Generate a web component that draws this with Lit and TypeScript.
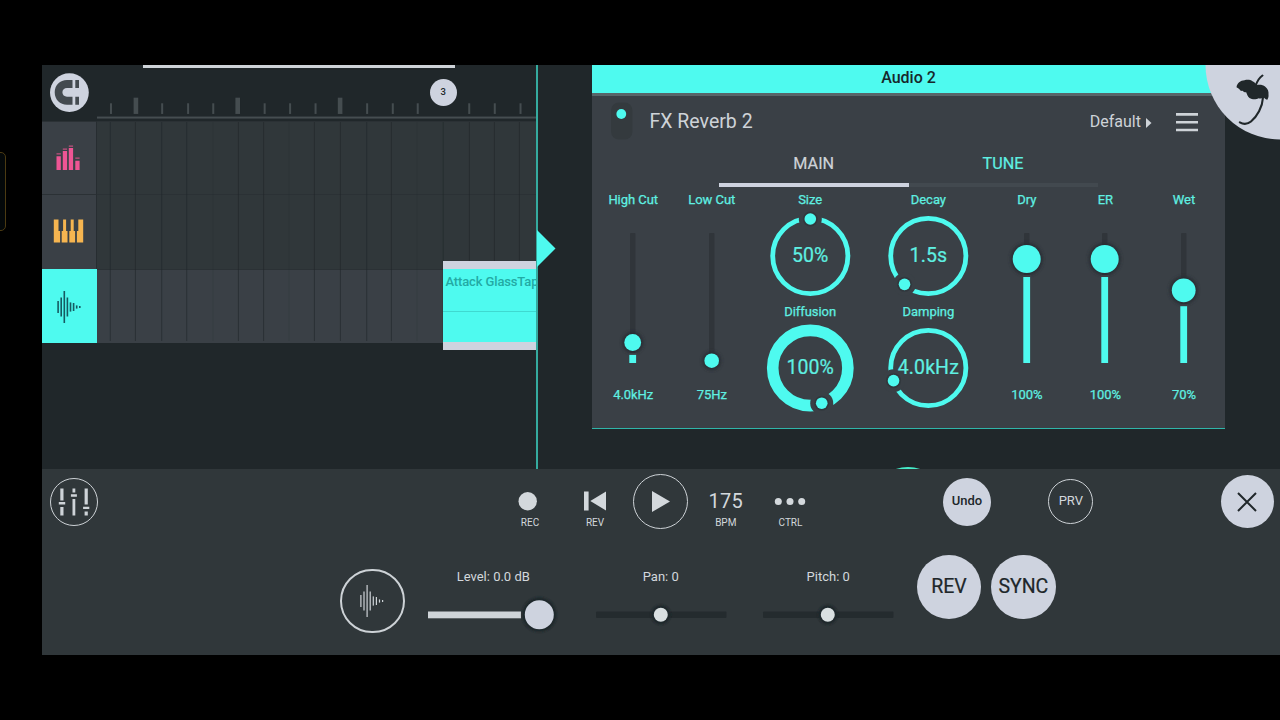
import { LitElement, html, svg, css } from "lit";
import { customElement, property } from "lit/decorators.js";

/** Vertical fader: label, track with thumb, value. */
@customElement("fx-fader")
export class FxFader extends LitElement {
  @property() label = "";
  @property() value = "";
  @property({ type: Number }) thumb = 0;
  @property({ type: Number }) radius = 8;

  static styles = css`
    :host { display: flex; flex-direction: column; align-items: center; }
    .label, .value { font-size: 13px; line-height: 16px; font-weight: 400; -webkit-text-stroke: 0.25px #5ff0e2; white-space: nowrap; letter-spacing: -0.05px; }
    .value { margin-top: 14px; }
    svg { display: block; margin-top: 15px; }
  `;

  render() {
    const fillTop = this.thumb + this.radius + 4;
    return html`
      <div class="label">${this.label}</div>
      <svg width="60" height="150" viewBox="0 0 60 150">
        <defs>
          <filter id="s" x="-50%" y="-50%" width="200%" height="200%"><feGaussianBlur stdDeviation="1.6" /></filter>
        </defs>
        <rect x="27" y="10" width="5.5" height="130" fill="#30353a" rx="1" />
        <circle cx="29.7" cy=${this.thumb} r=${this.radius + 2.5} fill="#262b31" opacity=".75" filter="url(#s)" />
        <rect x="26" y=${fillTop - 2} width="8" height="${Math.max(0, 142 - fillTop)}" fill="#3a4046" />
        ${fillTop < 138
          ? svg`<rect x="26.3" y=${fillTop} width="6.8" height=${140 - fillTop} fill="#4efaef" />`
          : ""}
        <circle cx="29.7" cy=${this.thumb} r=${this.radius} fill="#4efaef" />
      </svg>
      <div class="value">${this.value}</div>
    `;
  }
}

/** Rotary dial: ring with an indicator dot and a centered readout. */
@customElement("fx-dial")
export class FxDial extends LitElement {
  @property() label = "";
  @property() value = "";
  @property({ type: Number }) angle = 0;
  @property({ type: Number }) ring = 4.8;

  static styles = css`
    :host { display: flex; flex-direction: column; align-items: center; height: 111.5px; }
    .label { font-size: 13px; line-height: 16px; font-weight: 400; -webkit-text-stroke: 0.25px #5ff0e2; white-space: nowrap; letter-spacing: -0.05px; }
    .dial { display: grid; place-items: center; margin-top: 3.4px; }
    .dial > * { grid-area: 1 / 1; }
    svg { display: block; }
    .value { font-size: 19.5px; line-height: 24px; margin-top: -0.6px; letter-spacing: 0.1px; white-space: nowrap; -webkit-text-stroke: 0.2px #5ff0e2; }
  `;

  render() {
    const a = (this.angle * Math.PI) / 180;
    const x = 45.3 + Math.sin(a) * 37;
    const y = 45 - Math.cos(a) * 37;
    return html`
      <div class="label">${this.label}</div>
      <div class="dial">
        <svg width="90" height="90" viewBox="0 0 90 90">
          <circle cx="45.3" cy="45" r="37.6" fill="none" stroke="#4efaef" stroke-width=${this.ring} />
          <circle cx=${x} cy=${y} r="11.5" fill="#3a4046" />
          <circle cx=${x} cy=${y} r="7.5" fill="#2c3237" opacity=".6" />
          <circle cx=${x} cy=${y} r="5.8" fill="#4efaef" />
        </svg>
        <div class="value">${this.value}</div>
      </div>
    `;
  }
}

/** Horizontal slider with a caption above it. */
@customElement("mix-slider")
export class MixSlider extends LitElement {
  @property() label = "";
  @property({ type: Number }) thumb = 64.8;
  @property({ type: Number }) radius = 7;
  @property({ type: Boolean }) filled = false;

  static styles = css`
    :host { display: flex; flex-direction: column; align-items: center; width: 130.5px; }
    .label { font-size: 13px; line-height: 16px; color: #d3d8dc; white-space: nowrap; }
    svg { display: block; overflow: visible; margin-top: 10px; }
  `;

  render() {
    return html`
      <div class="label">${this.label}</div>
      <svg width="130.5" height="40" viewBox="0 0 130.5 40">
        <defs>
          <filter id="s" x="-50%" y="-50%" width="200%" height="200%"><feGaussianBlur stdDeviation="1.2" /></filter>
        </defs>
        ${this.filled
          ? svg`<rect x="0" y="16.5" width=${this.thumb - 18.3} height="6.8" fill="#cfd4d8" />`
          : svg`<rect x="0" y="16.5" width="130.5" height="6.5" rx="1" fill="#242b2e" />`}
        <circle cx=${this.thumb} cy="19.7" r=${this.radius + 2.6} fill="#1e2529" filter="url(#s)" />
        <circle cx=${this.thumb} cy="19.7" r=${this.radius} fill=${this.filled ? "#ced3df" : "#d9dfe1"} />
      </svg>
    `;
  }
}

const WAVE: Array<[number, number]> = [
  [0, 6], [3.1, 9.5], [6.2, 16], [9.3, 9.5], [12.4, 4.6], [15.5, 4], [18.6, 1.6], [21.7, 1],
];

const wave = (color: string, w: number) => html`
  <svg width="24" height="34" viewBox="0 0 24 34">
    ${WAVE.map(([x, h]) => svg`<rect x=${x + 0.3} y=${17 - h} width=${w} height=${h * 2} fill=${color} />`)}
  </svg>
`;

const TICKS = [111, 136, 162.3, 188.3, 213.5, 238, 265, 290.5, 316, 340.6, 367.7, 393.4, 418.4, 470, 495.6, 521.4];
const LINES = [110.3, 135.4, 161.7, 186.7, 213, 238.4, 263.6, 289, 314.4, 340.4, 366.7, 391.4, 417, 443.2, 469.4, 494.4, 519.4];
const WIDE = [1, 5, 9];
const FAINT = [4, 7, 12];

@customElement("app-root")
export class AppRoot extends LitElement {
  static styles = css`
    :host { display: block; width: 1280px; height: 720px; background: #000; overflow: hidden; position: relative;
      font-family: Roboto, sans-serif; box-sizing: border-box; padding: 65px 0 65px 42px; }
    * { box-sizing: border-box; }
    svg { display: block; }
    .edge { position: absolute; left: -10px; top: 152px; width: 15.5px; height: 79px; border: 1px solid #4b3a12; border-radius: 5px; background: #040809; }

    .stage { position: relative; display: flex; height: 404px; background: #20272a; overflow: hidden; }
    .arranger { width: 494px; position: relative; flex: none; overflow: hidden; }
    .head { display: flex; height: 56px; }
    .corner { width: 55px; padding: 8px 0 0 8px; }
    .ruler { width: 440px; height: 57px; }
    .tracks { display: grid; grid-template: 73px 75px 74px / 55px 1fr; }
    .tracks > div { border-top: 1px solid #2b3135; }
    .tile { background: #3a4046; display: grid; place-items: center; border-right: 1px solid #272d31; }
    .tile.keys { padding-bottom: 1px; }
    .tracks > .tile.on { background: #4efaef; border-color: #4efaef; padding-top: 1px; }
    .lane { background: #30373a; }
    .lane.on { background: #3a4046; }
    .grid { position: absolute; left: 55px; top: 57px; }
    .scroll { position: absolute; left: 101px; top: 0; width: 312px; height: 2.6px; background: #ced3d8; }
    .bar { position: absolute; left: 387.6px; top: 14.2px; width: 27px; height: 27px; border-radius: 50%; background: #ced3df; color: #20272a;
      font-size: 9.5px; font-weight: 500; line-height: 25px; text-align: center; }
    .clip { position: absolute; left: 401px; top: 196px; width: 93px; height: 88.5px; background: #4efaef; border: solid #ced3df; border-width: 8px 0; }
    .clip-name { font-size: 13px; font-weight: 500; line-height: 16px; padding: 5px 0 0 2.5px; color: #23aaa4; white-space: nowrap; height: 43px; border-bottom: 1px solid #3fd9d0; letter-spacing: -.14px; }
    .playhead { width: 2px; background: #35ab9f; flex: none; }
    .marker { position: absolute; left: 495px; top: 165px; }

    .fx { margin-left: 54px; width: 633px; height: 364px; flex: none; background: #3a4046; color: #5ff0e2; border-bottom: 1.4px solid #2fb5a9; }
    .fx-title { height: 28px; background: #4efaef; color: #17272b; text-align: center; font-size: 16px; font-weight: 500; line-height: 25px; }
    .fx-rule { height: 3px; background: #586569; }
    .fx-head { display: flex; align-items: center; height: 50px; padding: 0 27px 0 19px; color: #ced3d8; }
    .fx-name { font-size: 19.5px; margin-left: 16.5px; flex: 1; }
    .preset { font-size: 16px; }
    .arrow { margin: 3px 24px 0 5px; }
    .menu { margin-top: 1.6px; }
    .tabs { display: grid; grid-template-columns: 189.5px 189px; margin-left: 127px; height: 41px; }
    .tab { text-align: center; font-size: 16.2px; line-height: 36px; height: 41px; border-bottom: 4px solid #42494f; -webkit-text-stroke: 0.2px currentColor; }
    .tab.on { color: #ced3d8; border-color: #ced3df; }
    .controls { display: grid; grid-template-columns: 78.6px 78.6px 118.2px 118.2px 78.6px 78.6px 78.6px; padding: 5px 0 0 1.9px; }

    .logo { position: absolute; left: 1163px; top: -75px; }
    .peek { position: absolute; left: 828px; top: 401.7px; width: 76px; height: 76px; border-radius: 50%; background: #46ecc9; }

    .dock { height: 186px; background: #30373a; color: #d3d8dc; }
    .transport { display: flex; height: 66px; align-items: flex-start; }
    .stack { display: flex; flex-direction: column; align-items: center; width: 60px; padding-top: 20.5px; }
    .cap { font-size: 10px; line-height: 12px; margin-top: 5px; }
    .glyph { height: 22px; display: grid; place-items: center; }
    .bpm { font-size: 20px; line-height: 22px; letter-spacing: .2px; }
    .round { border-radius: 50%; display: grid; place-items: center; flex: none; }
    .solid { background: #ced3df; color: #20272a; }
    .ring { border: 1.4px solid #cdd2d6; }
    .mixer { width: 48.5px; height: 48.5px; margin: 8.5px 0 0 7.8px; }
    .rec { margin-left: 401.7px; }
    .rev { margin-left: 5px; }
    .play { width: 55px; height: 55px; margin: 5px 7.5px 0 8.3px; }
    .ctrl { margin-left: 4.7px; }
    .undo { width: 48px; height: 48px; margin: 8.5px 0 0 122.5px; font-size: 13px; font-weight: 500; padding-bottom: 2px; }
    .prv { width: 45px; height: 45px; margin: 10px 0 0 57.4px; font-size: 13px; padding-bottom: 2px; }
    .close { width: 53px; height: 53px; margin: 6px 0 0 127.5px; padding-right: 1.6px; }
    .channel { display: flex; padding-left: 298px; }
    .voice { width: 64.5px; height: 64.5px; margin: 33.5px 23.5px 0 0; border-width: 2px; }
    .sliders { display: flex; gap: 37px; padding-top: 33.7px; }
    .big { width: 64.8px; height: 64.8px; margin-top: 19.6px; font-size: 19.5px; padding-bottom: 1px; -webkit-text-stroke: 0.2px #20272a; }
    .big.first { margin-left: 23px; margin-right: 9.7px; }
  `;

  render() {
    return html`
      <div class="edge"></div>
      <div class="stage">
        <div class="arranger">
          <div class="head">
            <div class="corner">
              <svg width="39" height="39" viewBox="0 0 39 39">
                <circle cx="19.4" cy="19.6" r="19.4" fill="#ced3df" />
                <path d="M22.5 7H17C10 7 4.7 12 4.7 19.3S10 31.7 17 31.7h5.5v-8H17c-2.7 0-4.6-1.7-4.6-4.4s1.9-4.3 4.6-4.3h5.5z" fill="#434a50" />
                <path d="M25.3 7h3.7v8h-3.7zM25.3 23.7h3.7v8h-3.7z" fill="#434a50" />
              </svg>
            </div>
            <svg class="ruler" viewBox="97 65 440 57">
              ${TICKS.map((x, i) => WIDE.includes(i)
                ? svg`<rect x=${x - 2.3} y="97.7" width="4.6" height="16.3" fill="#454d50" />`
                : svg`<rect x=${x - 1} y="103.3" width="2" height="10.7" fill="#454d50" />`)}
              <rect x="97" y="116.6" width="440" height="2" fill="#454d50" />
            </svg>
          </div>
          <div class="tracks">
            <div class="tile">
              <svg width="26" height="26" viewBox="0 0 26 26" fill="#ee5594">
                <path d="M.5 11.2h4.3V25H.5zM6.8 6h4.3v19H6.8zM12.8 3h4.3v22h-4.3zM19.3 15.7h4.3V25h-4.3z" />
                <path d="M.5 8.3h4.3v1.3H.5zM6.8 3.4h4.3v1.3H6.8zM12.8.5h4.3v1.3h-4.3zM19.3 12.5h4.3v1.3h-4.3z" opacity=".75" />
              </svg>
            </div>
            <div class="lane"></div>
            <div class="tile keys">
              <svg width="32" height="26" viewBox="0 0 32 26" fill="#f6b550">
                <path d="M.8.5h4.7V12h1.6v11.5H.8zM10.1.5h3V12h1.4v11.5H8.7V12h1.4zM17.7.5h3V12h1.4v11.5h-5.8V12h1.4zM25.3.5h4.9v23h-6.3V12h1.4z" />
              </svg>
            </div>
            <div class="lane"></div>
            <div class="tile on">${wave("#165a62", 1.6)}</div>
            <div class="lane on"></div>
          </div>
          <svg class="grid" width="440" height="222" viewBox="97 122 440 222">
            ${LINES.map((x, i) => svg`<rect x=${x - 0.5} y="122" width="1" height="219" fill="#1f2629" opacity=${FAINT.includes(i) ? 0.15 : 0.6} />`)}
          </svg>
          <div class="scroll"></div>
          <div class="bar">3</div>
          <div class="clip"><div class="clip-name">Attack GlassTap</div></div>
        </div>
        <div class="playhead"></div>
        <svg class="marker" width="20" height="38" viewBox="0 0 20 38"><path d="M0 0l18.5 18.5L0 37z" fill="#4efaef" /></svg>

        <div class="fx">
          <div class="fx-title">Audio 2</div>
          <div class="fx-rule"></div>
          <div class="fx-head">
            <svg width="22" height="38" viewBox="0 0 22 38">
              <rect x="0" y="0.5" width="21.5" height="37" rx="8" fill="#343a3e" />
              <circle cx="10.3" cy="12" r="4.9" fill="#4efaef" />
            </svg>
            <div class="fx-name">FX Reverb 2</div>
            <div class="preset">Default</div>
            <svg class="arrow" width="6" height="10" viewBox="0 0 6 10"><path d="M0 0l5.5 5L0 10z" fill="#ced3d8" /></svg>
            <svg class="menu" width="22" height="20" viewBox="0 0 22 20"><path d="M0 2.4h22M0 10.2h22M0 18h22" stroke="#ced3d8" stroke-width="2.6" /></svg>
          </div>
          <div class="tabs">
            <div class="tab on">MAIN</div>
            <div class="tab">TUNE</div>
          </div>
          <div class="controls">
            <fx-fader label="High Cut" value="4.0kHz" .thumb=${119.5} .radius=${8.4}></fx-fader>
            <fx-fader label="Low Cut" value="75Hz" .thumb=${137.7} .radius=${7.3}></fx-fader>
            <div>
              <fx-dial label="Size" value="50%" .angle=${0}></fx-dial>
              <fx-dial label="Diffusion" value="100%" .angle=${162} .ring=${11.6}></fx-dial>
            </div>
            <div>
              <fx-dial label="Decay" value="1.5s" .angle=${220}></fx-dial>
              <fx-dial label="Damping" value="4.0kHz" .angle=${250}></fx-dial>
            </div>
            <fx-fader label="Dry" value="100%" .thumb=${36} .radius=${14}></fx-fader>
            <fx-fader label="ER" value="100%" .thumb=${36} .radius=${14}></fx-fader>
            <fx-fader label="Wet" value="70%" .thumb=${67.3} .radius=${11.9}></fx-fader>
          </div>
        </div>

        <svg class="logo" width="150" height="150" viewBox="1205 -10 150 150">
          <circle cx="1280" cy="65" r="74.5" fill="#ced3df" />
          <path d="M1236.5 87.3C1237 83 1240.500 80.300 1244.500 80.200C1247.500 79.500 1250.500 79.800 1252.500 81.200C1254.500 82 1256 83.500 1256.800 85.200C1259.500 84.500 1263 84.900 1265.300 86.700C1268 88.800 1268.800 91.500 1268.500 94.500C1268.800 96.500 1268.300 98.300 1267.300 99.800C1266 99.300 1264.800 98.700 1263.800 97.500C1262 98.700 1260 98.800 1258.500 98.300C1256.300 99.600 1252 99.600 1249.500 98C1247.500 96.500 1247 94.500 1246.200 92.300C1245 92.500 1243.500 91.900 1242.800 90.800C1241.500 91.200 1239.800 90.500 1239.300 89Z" fill="#20272a" />
          <path d="M1255.8 85.5C1257 81.500 1259 78 1262.500 75.500M1263 97.500C1262.500 107 1257 116.500 1251 121.500C1247.500 124.300 1243 124.300 1239.800 122.300" fill="none" stroke="#20272a" stroke-width="2.1" stroke-linecap="round" />
        </svg>
        <div class="peek"></div>
      </div>

      <div class="dock">
        <div class="transport">
          <div class="round ring mixer">
            <svg width="32" height="28" viewBox="0 0 32 28" fill="#ced3d8">
              <path d="M2.3.5h3.2v12H2.3zM2.3 19h3.2v8.5H2.3zM.8 14h6.4v2.4H.8zM14.5.5h2.8v4h-2.8zM14.5 11h2.8v16.5h-2.8zM12.9 6.2h6v2.5h-6zM26.6.5h3.2v16h-3.2zM26.6 23.5h3.2v4h-3.2zM25.1 18.7h6.2v2.4h-6.2z" />
            </svg>
          </div>
          <div class="stack rec">
            <div class="glyph"><svg width="24" height="20" viewBox="0 0 24 20"><circle cx="9.7" cy="10.3" r="9.2" fill="#d3d8dc" /></svg></div>
            <div class="cap">REC</div>
          </div>
          <div class="stack rev">
            <div class="glyph"><svg width="22" height="20" viewBox="0 0 22 20" fill="#d3d8dc"><path d="M0 .5h4.600v19H0zM22 .5v19L6.300 10z" /></svg></div>
            <div class="cap">REV</div>
          </div>
          <div class="round ring play">
            <svg width="20" height="22" viewBox="0 0 20 22"><path d="M1 0l18 10.500L1 21z" fill="#d3d8dc" /></svg>
          </div>
          <div class="stack">
            <div class="bpm">175</div>
            <div class="cap">BPM</div>
          </div>
          <div class="stack ctrl">
            <div class="glyph"><svg width="32" height="8" viewBox="0 0 32 8" fill="#d3d8dc"><circle cx="4.3" cy="4.5" r="3.5" /><circle cx="16" cy="4.5" r="3.5" /><circle cx="27.7" cy="4.5" r="3.5" /></svg></div>
            <div class="cap">CTRL</div>
          </div>
          <div class="round solid undo">Undo</div>
          <div class="round ring prv">PRV</div>
          <div class="round solid close">
            <svg width="20" height="20" viewBox="0 0 20 20"><path d="M1 1l18 18M19 1L1 19" stroke="#20272a" stroke-width="2" /></svg>
          </div>
        </div>
        <div class="channel">
          <div class="round ring voice">${wave("#cdd2d6", 1.2)}</div>
          <div class="sliders">
            <mix-slider label="Level: 0.0 dB" .thumb=${111.3} .radius=${14.5} filled></mix-slider>
            <mix-slider label="Pan: 0"></mix-slider>
            <mix-slider label="Pitch: 0"></mix-slider>
          </div>
          <div class="round solid big first">REV</div>
          <div class="round solid big">SYNC</div>
        </div>
      </div>
    `;
  }
}
